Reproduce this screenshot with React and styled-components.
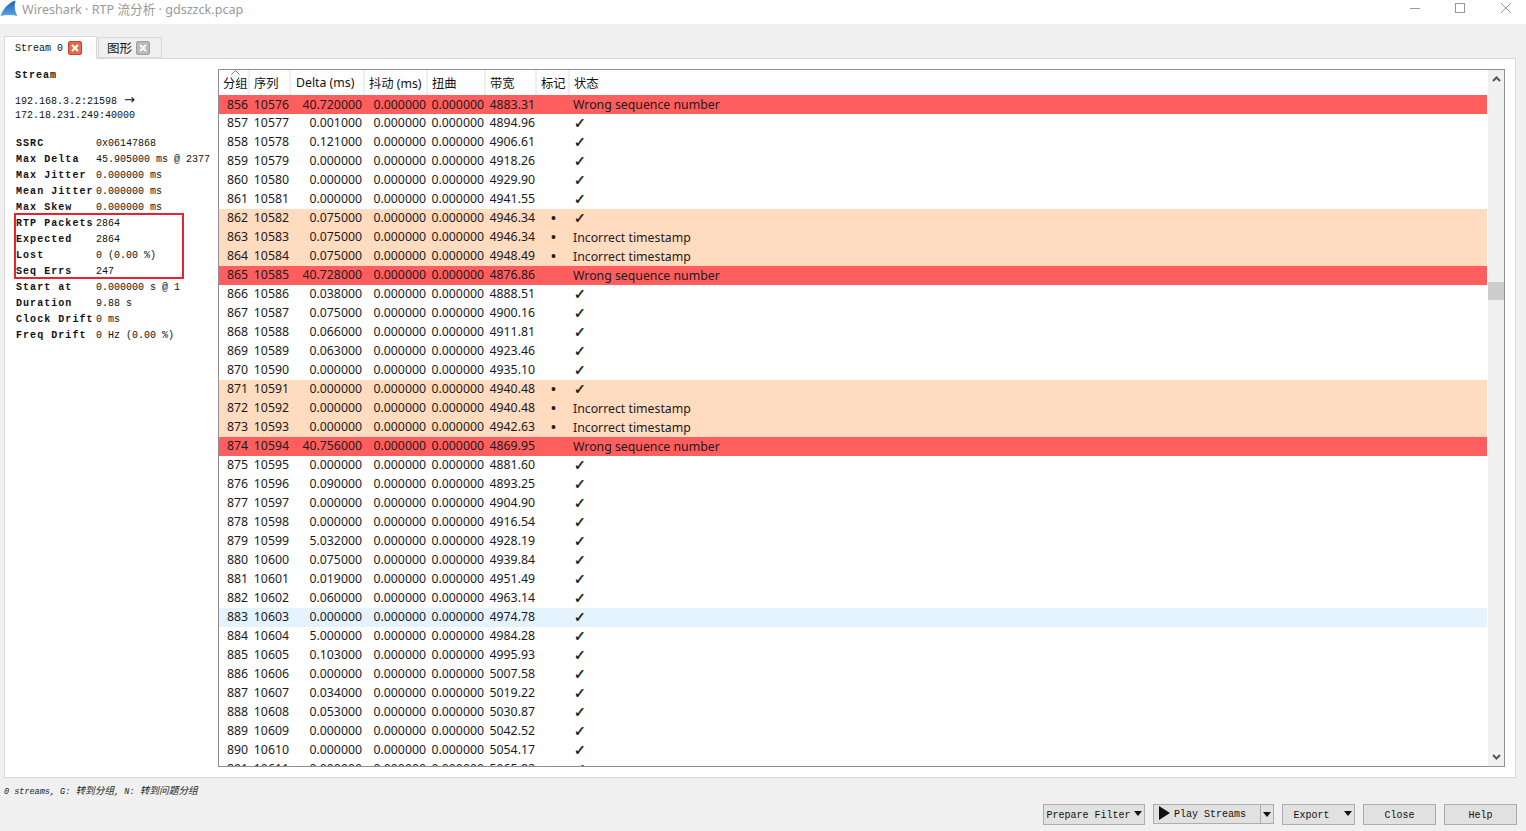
import React from "react";
import styled, { createGlobalStyle } from "styled-components";

const Global = createGlobalStyle`
  html, body { margin: 0; padding: 0; background: #f0f0f0; overflow: hidden; }
  #root { width: 1526px; height: 831px; }
  * { box-sizing: border-box; }
`;
const MONO = `"Liberation Mono", "Noto Sans CJK SC", monospace`;
const UI = `"Noto Sans", "Noto Sans CJK SC", sans-serif`;

const Page = styled.div`
  width: 1526px; height: 831px; display: flex; flex-direction: column;
  background: #f0f0f0; overflow: hidden; color: #111;
`;
const TitleBar = styled.header`
  height: 24px; flex: none; background: #fff; display: flex; align-items: center;
  font: 12.6px ${UI}; color: #9a9a9a;
`;
const Logo = styled.svg`width: 18px; height: 18px; margin: -6px 4px 0 0;`;
const TitleText = styled.span`flex: 1; margin-top: -7px;`;
const WinBtn = styled.svg`width: 46px; height: 16px; margin-top: -8px; stroke: #9a9a9a; fill: none;`;
const TabBar = styled.div`
  height: 34px; flex: none; padding: 12px 0 0 4px; display: flex; align-items: flex-end; gap: 1px;
`;
const Tab = styled.div`
  display: flex; align-items: center; gap: ${p => (p.$active ? 5 : 4)}px;
  padding-left: ${p => (p.$active ? 10 : 8)}px;
  height: ${p => (p.$active ? 23 : 21)}px; width: ${p => (p.$active ? 93 : 64)}px;
  background: ${p => (p.$active ? "#fff" : "#f0f0f0")};
  border: 1px solid #d9d9d9; border-bottom: ${p => (p.$active ? "0" : "1px solid #d9d9d9")};
  font: ${p => (p.$cjk ? "12.5px" : "10px")} ${MONO}; margin-bottom: ${p => (p.$active ? "-1px" : "0")};
  position: relative; z-index: 1;
`;
const CloseBox = styled.span`
  width: 14px; height: 14px; border-radius: 2px; display: inline-flex; align-items: center; justify-content: center;
  background: ${p => (p.$red ? "#e8694a" : "#b9b9b9")}; border: 1px solid ${p => (p.$red ? "#c9492c" : "#a0a0a0")};
`;
const Pane = styled.main`
  height: 720px; margin: 0 10px 0 4px; background: #fff; border: 1px solid #d9d9d9;
  display: flex; padding: 10px 10px 10px 0;
`;
const Side = styled.aside`
  width: 213px; flex: none; font: 10px/16px ${MONO}; padding-left: 10px;
`;
const Heading = styled.div`font: bold 10px/14px ${MONO}; letter-spacing: 1px; margin-bottom: 12px;`;
const Addr = styled.div`line-height: 14px; height: 14px; white-space: nowrap;`;
const ArrowGlyph = styled.span`font: 13px/0 "DejaVu Sans", sans-serif; margin-left: 1px;`;
const Stats = styled.div`margin: 13px 0 0 1px; width: 197px;`;
const Row = styled.div`display: flex; height: 16px; white-space: nowrap;`;
const Key = styled.span`width: 80px; flex: none; font-weight: bold; letter-spacing: 1.05px;`;
const Highlight = styled.div`
  position: relative;
  &::after {
    content: ""; box-sizing: border-box; position: absolute; left: -2px; top: -3px; width: 170px; height: 66px;
    border: 2px solid #e8222e; pointer-events: none;
  }
`;
const Frame = styled.section`
  flex: 1; border: 1px solid #8c8f96; display: flex; min-width: 0; height: 698px;
`;
const TableWrap = styled.div`flex: 1; min-width: 0; overflow: hidden;`;
const cols = "31px 41px 74px 63px 58px 51px 33px 1fr";
const HeaderRow = styled.div`
  display: grid; grid-template-columns: ${cols}; height: 25px; background: #fff;
  font: 12.3px ${UI}; position: relative;
`;
const Head = styled.div`
  padding-left: ${p => p.$pl || 4}px; border-right: 2px solid ${p => (p.$last ? "transparent" : "#efefef")};
  white-space: nowrap; display: flex; align-items: center;
`;
const Sort = styled.svg`position: absolute; left: 12px; top: 0; width: 9px; height: 5px;`;
const DataRow = styled.div`
  display: grid; grid-template-columns: ${cols}; height: 19px; align-items: start;
  background: ${p => ({ red: "#ff5e5e", orange: "#ffdbbf", blue: "#e5f3ff" }[p.$tone] || "#fff")};
  font: 12.3px/19px ${UI}; color: #1a1a1a;
`;
const Num = styled.div`
  text-align: right; padding-right: ${p => p.$pr || 2}px; white-space: nowrap; line-height: 17px; padding-bottom: 2px;
  margin-top: ${p => (p.$first ? 1 : 0)}px;
`;
const Mark = styled.div`text-align: center; font-size: 13px; font-weight: bold;`;
const StatusCell = styled.div`padding-left: 3px; white-space: nowrap;`;
const Check = styled.span`
  font: 14px/19px "DejaVu Sans", sans-serif; padding-left: 1px; -webkit-text-stroke: .4px #111; color: #111;
`;
const ScrollBar = styled.div`
  width: 17px; flex: none; background: #f0f0f0; display: flex; flex-direction: column;
  align-items: center; border-left: 1px solid #fff;
`;
const Arrow = styled.svg`width: 9px; height: 7px; flex: none; margin: ${p => p.$m};`;
const Track = styled.div`flex: 1; width: 100%;`;
const Thumb = styled.div`height: 18px; margin-top: 200px; background: #cdcdcd; width: 100%;`;
const StatusLine = styled.div`
  height: 26px; flex: none; padding-left: 4px; font: italic 8.5px/27px ${MONO}; color: #222;
`;
const CjkRun = styled.span`font-size: 9.7px;`;
const Footer = styled.footer`
  display: flex; justify-content: flex-end; gap: 8px; padding-right: 9px; align-items: flex-start;
`;
const Btn = styled.div`
  width: ${p => p.$w}px; height: ${p => p.$h || 21}px; background: #e1e1e1; border: 1px solid #adadad;
  font: 10px ${MONO}; display: flex; align-items: center; justify-content: ${p => (p.$split ? "flex-start" : "center")}; gap: ${p => p.$gap ?? 3}px;
  padding: ${p => (p.$split ? "0 0 0 5px" : `2px 0 0 ${p.$pl || 0}px`)}; color: #111; white-space: nowrap;
`;
const PlayIcon = styled.svg`width: 11px; height: 14px; margin-top: -2px;`;
const Caret = styled.svg`width: 8px; height: 5px; margin: -4px 0 0 ${p => p.$ml || 0}px; flex: none;`;
const SplitPart = styled.div`
  margin-left: auto; height: 100%; border-left: 1px solid #adadad; width: 13px;
  display: flex; align-items: center; justify-content: center; padding-top: 4px;
`;

const raw = `40.720000 4883.31 r
0.001000 4894.96
0.121000 4906.61
0.000000 4918.26
0.000000 4929.90
0.000000 4941.55
0.075000 4946.34 oc
0.075000 4946.34 oi
0.075000 4948.49 oi
40.728000 4876.86 r
0.038000 4888.51
0.075000 4900.16
0.066000 4911.81
0.063000 4923.46
0.000000 4935.10
0.000000 4940.48 oc
0.000000 4940.48 oi
0.000000 4942.63 oi
40.756000 4869.95 r
0.000000 4881.60
0.090000 4893.25
0.000000 4904.90
0.000000 4916.54
5.032000 4928.19
0.075000 4939.84
0.019000 4951.49
0.060000 4963.14
0.000000 4974.78 b
5.000000 4984.28
0.103000 4995.93
0.000000 5007.58
0.034000 5019.22
0.053000 5030.87
0.000000 5042.52
0.000000 5054.17
0.000000 5065.82`.split("\n").map(l => l.split(" "));

const X = () => (
  <svg width="8" height="8" viewBox="0 0 8 8"><path d="M1 1L7 7M7 1L1 7" stroke="#fff" strokeWidth="2" /></svg>
);
const CaretDown = p => (
  <Caret viewBox="0 0 8 5" {...p}><path d="M0 0H8L4 5Z" fill="#111" /></Caret>
);

const Stat = ({ k, v }) => <Row><Key>{k}</Key><span>{v}</span></Row>;

export default function App() {
  return (
    <Page>
      <Global />
      <TitleBar>
        <Logo viewBox="0 0 18 18">
          <defs>
            <linearGradient id="fin" x1="0" y1="0" x2="0" y2="1">
              <stop offset="0" stopColor="#1c5fb0" />
              <stop offset="1" stopColor="#5aa5e8" />
            </linearGradient>
          </defs>
          <path d="M0.5 16C3 9 8 3 15.5 0.5C14 6 14.5 11 17.5 16C12 14.5 6 14.5 0.5 16Z" fill="url(#fin)" />
        </Logo>
        <TitleText>Wireshark · RTP 流分析 · gdszzck.pcap</TitleText>
        <WinBtn viewBox="0 0 46 16"><path d="M22 8.5H32" /></WinBtn>
        <WinBtn viewBox="0 0 46 16"><rect x="21.5" y="3.5" width="9" height="9" /></WinBtn>
        <WinBtn viewBox="0 0 46 16"><path d="M21 3L31 13M31 3L21 13" /></WinBtn>
      </TitleBar>
      <TabBar>
        <Tab $active>Stream 0<CloseBox $red><X /></CloseBox></Tab>
        <Tab $cjk>图形<CloseBox><X /></CloseBox></Tab>
      </TabBar>
      <Pane>
        <Side>
          <Heading>Stream</Heading>
          <Addr>192.168.3.2:21598 <ArrowGlyph>→</ArrowGlyph></Addr>
          <Addr>172.18.231.249:40000</Addr>
          <Stats>
            <Stat k="SSRC" v="0x06147868" />
            <Stat k="Max Delta" v="45.905000 ms @ 2377" />
            <Stat k="Max Jitter" v="0.000000 ms" />
            <Stat k="Mean Jitter" v="0.000000 ms" />
            <Stat k="Max Skew" v="0.000000 ms" />
            <Highlight>
              <Stat k="RTP Packets" v="2864" />
              <Stat k="Expected" v="2864" />
              <Stat k="Lost" v="0 (0.00 %)" />
              <Stat k="Seq Errs" v="247" />
            </Highlight>
            <Stat k="Start at" v="0.000000 s @ 1" />
            <Stat k="Duration" v="9.88 s" />
            <Stat k="Clock Drift" v="0 ms" />
            <Stat k="Freq Drift" v="0 Hz (0.00 %)" />
          </Stats>
        </Side>
        <Frame>
          <TableWrap>
            <HeaderRow>
              <Sort viewBox="0 0 9 5"><path d="M.5 4.5L4.5 .5L8.5 4.5" fill="none" stroke="#777" /></Sort>
              {["分组", "序列"].map(h => <Head key={h}>{h}</Head>)}
              <Head $pl={5}>Delta (ms)</Head>
              {["抖动 (ms)", "扭曲", "带宽", "标记"].map(h => <Head key={h}>{h}</Head>)}
              <Head $last>状态</Head>
            </HeaderRow>
            {raw.map(([delta, bw, f = ""], i) => {
              const tone = f === "r" ? "red" : f[0] === "o" ? "orange" : f === "b" ? "blue" : "";
              const first = i === 0;
              return (
                <DataRow key={i} $tone={tone}>
                  <Num $first={first}>{856 + i}</Num>
                  <Num $first={first}>{10576 + i}</Num>
                  <Num $first={first} $pr={3}>{delta}</Num>
                  <Num $first={first}>0.000000</Num>
                  <Num $first={first}>0.000000</Num>
                  <Num $first={first}>{bw}</Num>
                  <Mark>{f[0] === "o" ? "•" : ""}</Mark>
                  <StatusCell>
                    {f === "r" ? "Wrong sequence number" : f === "oi" ? "Incorrect timestamp" : <Check>✓</Check>}
                  </StatusCell>
                </DataRow>
              );
            })}
          </TableWrap>
          <ScrollBar>
            <Arrow viewBox="0 0 9 7" $m="5px 0 0"><path d="M1 6L4.5 2.5L8 6" fill="none" stroke="#555" strokeWidth="2" /></Arrow>
            <Track><Thumb /></Track>
            <Arrow viewBox="0 0 9 7" $m="0 0 5px"><path d="M1 1L4.5 4.5L8 1" fill="none" stroke="#555" strokeWidth="2" /></Arrow>
          </ScrollBar>
        </Frame>
      </Pane>
      <StatusLine>0 streams, G: <CjkRun>转到分组</CjkRun>, N: <CjkRun>转到问题分组</CjkRun></StatusLine>
      <Footer>
        <Btn $w={102}>Prepare Filter<CaretDown /></Btn>
        <Btn $w={121} $h={20} $split $gap={4}>
          <PlayIcon viewBox="0 0 11 14"><path d="M0 0L11 7L0 14Z" fill="#111" /></PlayIcon>
          Play Streams
          <SplitPart><CaretDown /></SplitPart>
        </Btn>
        <Btn $w={73} $pl={8} $gap={4}>Export<CaretDown $ml={10} /></Btn>
        <Btn $w={73}>Close</Btn>
        <Btn $w={73}>Help</Btn>
      </Footer>
    </Page>
  );
}
